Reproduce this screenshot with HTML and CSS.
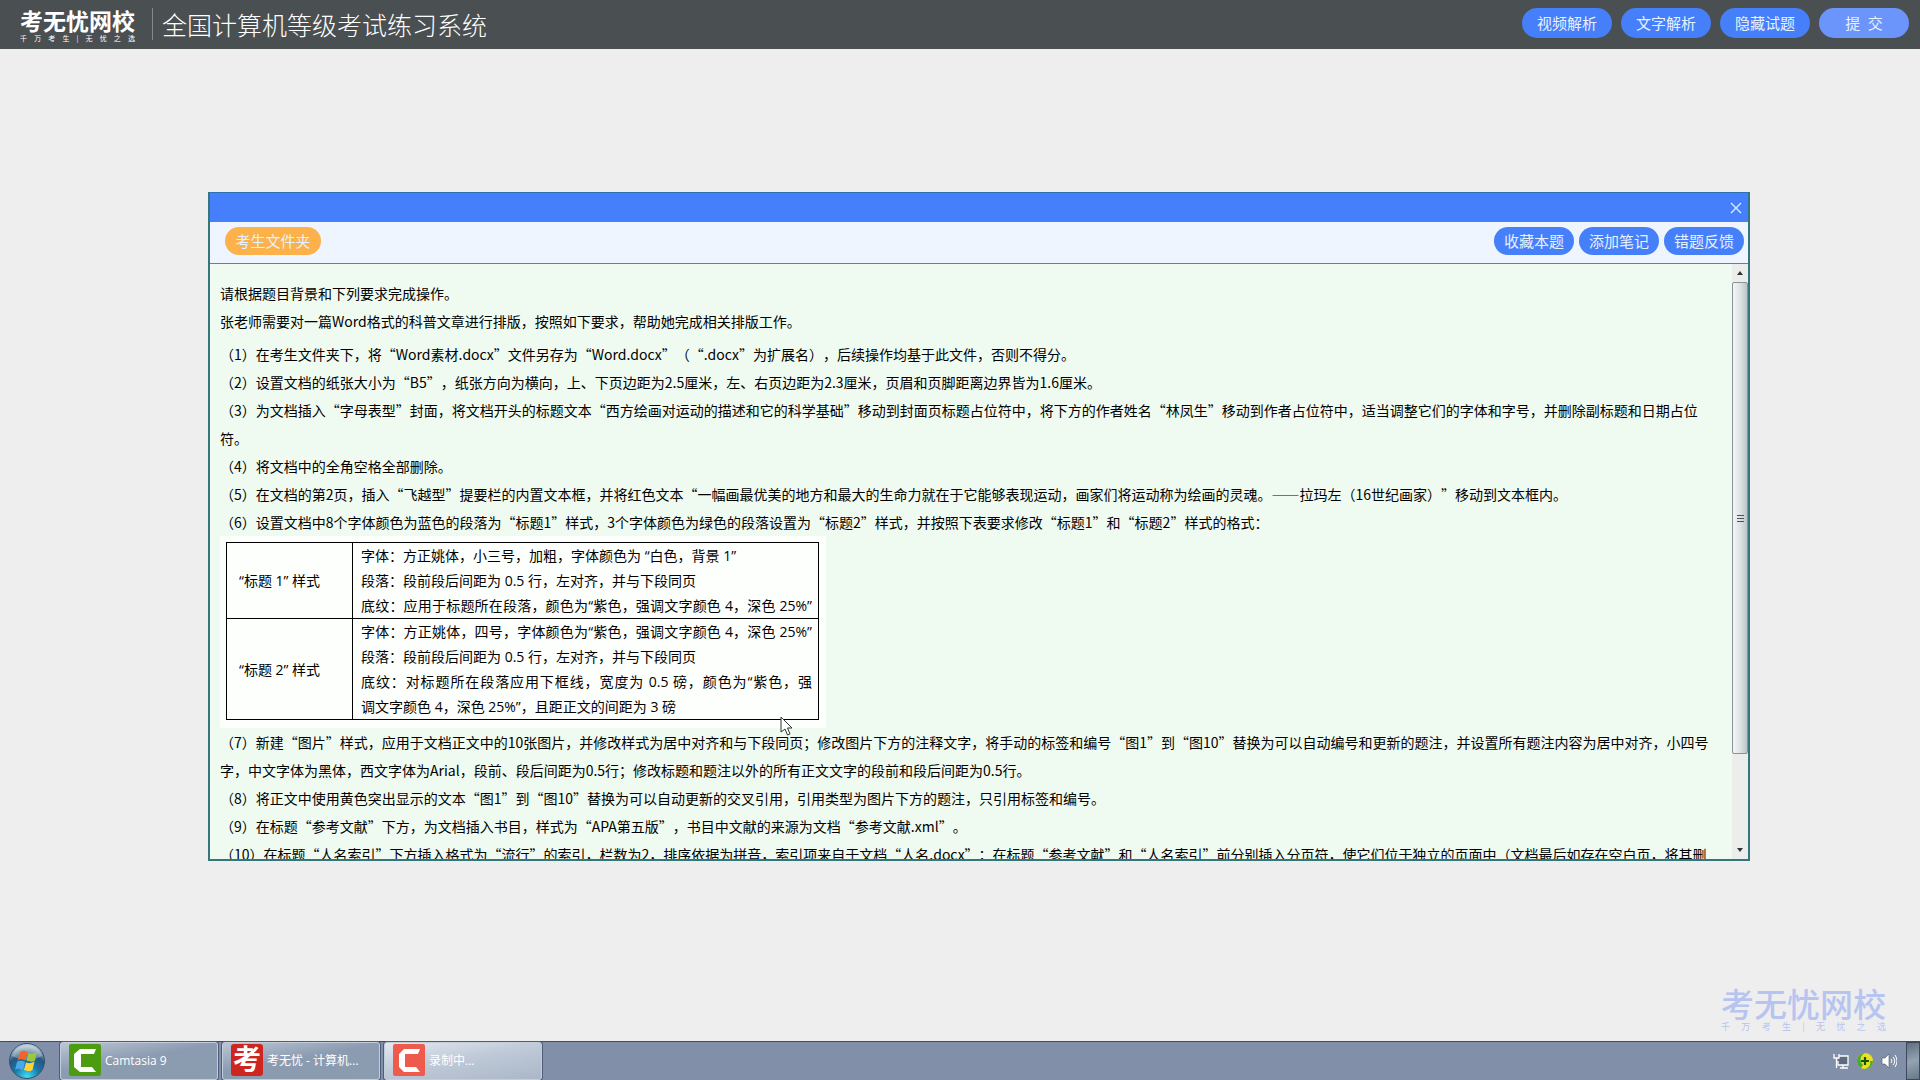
FILE: index.html
```html
<!DOCTYPE html>
<html lang="zh-CN">
  <head>
    <meta charset="UTF-8" />
    <meta name="viewport" content="width=device-width, initial-scale=1.0" />
    <title>全国计算机等级考试练习系统</title>
    <link rel="stylesheet" href="styles.css" />
  </head>
  <body>
    <header class="topbar">
      <div class="logo">
        <div class="logo_name">考无忧网校</div>
        <div class="logo_tag">
          <span>千</span><span>万</span><span>考</span><span>生</span><span>|</span><span>无</span><span>忧</span><span>之</span><span>选</span>
        </div>
      </div>
      <h1 class="title">全国计算机等级考试练习系统</h1>
      <nav class="actions">
        <button class="pill" type="button">视频解析</button>
        <button class="pill" type="button">文字解析</button>
        <button class="pill" type="button">隐藏试题</button>
        <button class="pill pill_light" type="button">提&ensp;交</button>
      </nav>
    </header>

    <main class="desktop">
      <section class="window">
        <div class="window_title">
          <button class="close" type="button" aria-label="关闭">
            <svg width="12" height="12" viewBox="0 0 12 12">
              <path d="M1 1l10 10M11 1L1 11" stroke="#d8f0ff" stroke-width="1.3" fill="none" />
            </svg>
          </button>
        </div>
        <div class="toolbar">
          <button class="pill pill_folder" type="button">考生文件夹</button>
          <div class="toolbar_right">
            <button class="pill pill_small" type="button">收藏本题</button>
            <button class="pill pill_small" type="button">添加笔记</button>
            <button class="pill pill_small" type="button">错题反馈</button>
          </div>
        </div>
        <div class="paper">
          <article class="question">
            <div class="intro">
              <p>请根据题目背景和下列要求完成操作。</p>
              <p>张老师需要对一篇Word格式的科普文章进行排版，按照如下要求，帮助她完成相关排版工作。</p>
            </div>
            <p>（1）在考生文件夹下，将“Word素材.docx”文件另存为“Word.docx”（“.docx”为扩展名），后续操作均基于此文件，否则不得分。</p>
            <p>（2）设置文档的纸张大小为“B5”，纸张方向为横向，上、下页边距为2.5厘米，左、右页边距为2.3厘米，页眉和页脚距离边界皆为1.6厘米。</p>
            <p>（3）为文档插入“字母表型”封面，将文档开头的标题文本“西方绘画对运动的描述和它的科学基础”移动到封面页标题占位符中，将下方的作者姓名“林凤生”移动到作者占位符中，适当调整它们的字体和字号，并删除副标题和日期占位<br />符。</p>
            <p>（4）将文档中的全角空格全部删除。</p>
            <p>（5）在文档的第2页，插入“飞越型”提要栏的内置文本框，并将红色文本“一幅画最优美的地方和最大的生命力就在于它能够表现运动，画家们将运动称为绘画的灵魂。——拉玛左（16世纪画家）”移动到文本框内。</p>
            <p>（6）设置文档中8个字体颜色为蓝色的段落为“标题1”样式，3个字体颜色为绿色的段落设置为“标题2”样式，并按照下表要求修改“标题1”和“标题2”样式的格式：</p>
            <div class="figure">
              <table class="styles_table">
                <tr>
                  <th scope="row">“标题 1” 样式</th>
                  <td>
                    <div>字体：方正姚体，小三号，加粗，字体颜色为 “白色，背景 1”</div>
                    <div>段落：段前段后间距为 0.5 行，左对齐，并与下段同页</div>
                    <div class="full">底纹：应用于标题所在段落，颜色为“紫色，强调文字颜色 4，深色 25%”</div>
                  </td>
                </tr>
                <tr>
                  <th scope="row">“标题 2” 样式</th>
                  <td>
                    <div class="full">字体：方正姚体，四号，字体颜色为“紫色，强调文字颜色 4，深色 25%”</div>
                    <div>段落：段前段后间距为 0.5 行，左对齐，并与下段同页</div>
                    <div class="full">底纹：对标题所在段落应用下框线，宽度为 0.5 磅，颜色为“紫色，强</div>
                    <div>调文字颜色 4，深色 25%”，且距正文的间距为 3 磅</div>
                  </td>
                </tr>
              </table>
              <svg class="cursor" width="13" height="20" viewBox="0 0 13 20">
                <path d="M1 1v15l4-3 2.500 6 2.500-1-2.500-6h4.500z" fill="#fff" stroke="#333" />
              </svg>
            </div>
            <p>（7）新建“图片”样式，应用于文档正文中的10张图片，并修改样式为居中对齐和与下段同页；修改图片下方的注释文字，将手动的标签和编号“图1”到“图10”替换为可以自动编号和更新的题注，并设置所有题注内容为居中对齐，小四号<br />字，中文字体为黑体，西文字体为Arial，段前、段后间距为0.5行；修改标题和题注以外的所有正文文字的段前和段后间距为0.5行。</p>
            <p>（8）将正文中使用黄色突出显示的文本“图1”到“图10”替换为可以自动更新的交叉引用，引用类型为图片下方的题注，只引用标签和编号。</p>
            <p>（9）在标题“参考文献”下方，为文档插入书目，样式为“APA第五版”，书目中文献的来源为文档“参考文献.xml”。</p>
            <p>（10）在标题“人名索引”下方插入格式为“流行”的索引，栏数为2，排序依据为拼音，索引项来自于文档“人名.docx”；在标题“参考文献”和“人名索引”前分别插入分页符，使它们位于独立的页面中（文档最后如存在空白页，将其删</p>
          </article>
          <div class="scrollbar">
            <svg class="arrow" width="16" height="18" viewBox="0 0 16 18"><path d="M5 11l3-4 3 4z" fill="#333" /></svg>
            <div class="thumb"><i></i><i></i><i></i></div>
            <svg class="arrow" width="16" height="18" viewBox="0 0 16 18"><path d="M5 7l3 4 3-4z" fill="#333" /></svg>
          </div>
        </div>
      </section>
      <div class="logo logo_watermark">
        <div class="logo_name">考无忧网校</div>
        <div class="logo_tag">
          <span>千</span><span>万</span><span>考</span><span>生</span><span>|</span><span>无</span><span>忧</span><span>之</span><span>选</span>
        </div>
      </div>
    </main>

    <footer class="taskbar">
      <button class="start" type="button" aria-label="开始">
        <svg width="38" height="38" viewBox="0 0 38 38">
          <defs>
            <radialGradient id="orb" cx="50%" cy="95%" r="90%">
              <stop offset="0" stop-color="#3fe0f5" />
              <stop offset=".4" stop-color="#1878a8" />
              <stop offset=".7" stop-color="#28567e" />
              <stop offset="1" stop-color="#b8cbd8" />
            </radialGradient>
          </defs>
          <circle cx="19" cy="19" r="17.500" fill="url(#orb)" stroke="#33516f" />
          <path d="M4 14C8 0 30 0 34 14 26 19 12 18 4 14z" fill="#fff" opacity=".3" />
          <path d="M12 10c3-2 5-1 7.500 0l-2 8.500c-3-1-5-2-8 0z" fill="#f0652b" />
          <path d="M20.500 11c3 1 5 1 8.500-1l-2 8.500c-3 2-5 1-8.500 0z" fill="#9bc83c" />
          <path d="M9 20c3-2 5-1 8 0l-2 8c-3-1-5-2-8 0z" fill="#4aa8e8" />
          <path d="M18 20.500c3 1 5 1 8.500-1l-2 8.500c-3 2-5 1-8.500 0z" fill="#ffd23c" />
        </svg>
      </button>
      <button class="task" type="button">
        <svg width="32" height="32" viewBox="0 0 32 32">
          <rect width="32" height="32" rx="2" fill="#4c9c12" />
          <path d="M27 5h-16l-6 5v13l6 5h16l-4-5h-11v-13h13z" fill="#fff" />
        </svg>
        Camtasia 9
      </button>
      <button class="task" type="button">
        <span class="seal">考</span>
        考无忧 - 计算机...
      </button>
      <button class="task task_active" type="button">
        <svg width="32" height="32" viewBox="0 0 32 32">
          <rect width="32" height="32" rx="2" fill="#ee5b4c" />
          <path d="M27 5h-16l-5 5v13l5 5h16l-4-5h-11v-13h13z" fill="#fff" />
        </svg>
        录制中...
      </button>
      <div class="tray">
        <svg width="16" height="16" viewBox="0 0 16 16">
          <path d="M6 3h9v9H5V8" fill="#5d6c80" stroke="#fff" stroke-width="1.300" />
          <path d="M1 1v4h5V1M3.500 5v10M7 15h8M10 12v3" fill="none" stroke="#fff" stroke-width="1.300" />
        </svg>
        <svg width="18" height="18" viewBox="0 0 18 18">
          <circle cx="9" cy="9" r="8" fill="#e9e022" />
          <path d="M1 9a8 8 0 0 1 8-8c-5 2-6 8-2 12l-2 3a8 8 0 0 1-4-7zM17 9a8 8 0 0 1-8 8c5-2 6-5 5-8z" fill="#48a92c" />
          <path d="M9 5v8M5 9h8" stroke="#17520f" stroke-width="2.200" />
        </svg>
        <svg width="16" height="16" viewBox="0 0 16 16">
          <path d="M1 5h3l4-4v14l-4-4H1z" fill="#fff" stroke="#4b586b" stroke-width=".6" />
          <path d="M10 6q2 2 0 4M12 4q3.500 4 0 8M14 2q4 6 0 12" fill="none" stroke="#fff" />
        </svg>
      </div>
      <button class="show_desktop" type="button" aria-label="显示桌面"></button>
    </footer>
  </body>
</html>
```
FILE: styles.css
```css
* {
  box-sizing: border-box;
}
body {
  margin: 0;
  height: 100vh;
  display: flex;
  flex-direction: column;
  overflow: hidden;
  background-color: #eeeeee;
  color: #000;
  font-family: "Noto Sans CJK SC", sans-serif;
  font-size: 14px;
  text-spacing-trim: space-all;
}
button {
  margin: 0;
  padding: 0;
  border: 0;
  font-family: inherit;
}
svg {
  display: block;
  flex: none;
}

/* header */
.topbar {
  flex: none;
  display: flex;
  align-items: center;
  height: 49px;
  padding: 0 11px 0 20px;
  background-color: #4a4f52;
  color: #fff;
}
.logo_name {
  font-size: 23px;
  font-weight: 700;
  line-height: 24px;
}
.logo_tag {
  display: flex;
  justify-content: space-between;
  margin-top: 2px;
  font-size: 7px;
  line-height: 8px;
}
.title {
  margin: 0 0 2px 17px;
  padding-left: 9px;
  border-left: 1px solid #85898b;
  font-size: 25px;
  font-weight: 300;
  line-height: 32px;
}
.actions {
  display: flex;
  gap: 9px;
  margin-left: auto;
  margin-bottom: 3px;
}
.pill {
  width: 90px;
  height: 30px;
  border-radius: 15px;
  background-color: #467ffa;
  color: #e6f2ff;
  font-size: 15px;
  line-height: 20px;
}
.pill_light {
  background-color: #6b95fb;
}
.pill_small {
  width: 80px;
  height: 28px;
}
.pill_folder {
  width: 96px;
  height: 28px;
  background-color: #fdb14b;
}

/* question window */
.desktop {
  position: relative;
  flex: 1;
  min-height: 0;
  display: flex;
  padding: 143px 170px 180px 208px;
}
.window {
  flex: 1;
  display: flex;
  flex-direction: column;
  min-width: 0;
  border: 2px solid #35757c;
  border-top: 1px solid #2d72b0;
}
.window_title {
  flex: none;
  display: flex;
  align-items: center;
  justify-content: flex-end;
  height: 29px;
  padding-right: 6px;
  background-color: #457ffb;
}
.close {
  background: none;
}
.toolbar {
  flex: none;
  display: flex;
  align-items: center;
  justify-content: space-between;
  height: 42px;
  padding: 0 4px 4px 15px;
  border-bottom: 1px solid #6c7f8d;
  background-color: #eef5ff;
}
.toolbar_right {
  display: flex;
  gap: 5px;
}
.paper {
  flex: 1;
  min-height: 0;
  display: flex;
  background-color: #effbf0;
}
.question {
  flex: 1;
  min-width: 0;
  padding: 15px 10px 0;
  overflow: hidden;
  line-height: 28px;
}
.question p {
  margin: 0;
  white-space: nowrap;
}
.intro {
  margin-bottom: 5px;
}
.figure {
  position: relative;
  width: fit-content;
  padding: 6px 7px 8px 6px;
  background-color: #fdfffd;
}
.styles_table {
  width: 593px;
  border-collapse: collapse;
  table-layout: fixed;
  font-family: "Open Sans", "Noto Sans CJK SC", sans-serif;
  line-height: 25px;
}
.styles_table th,
.styles_table td {
  padding: 0 6px 0 8px;
  border: 1px solid #000;
  white-space: nowrap;
}
.styles_table th {
  width: 126px;
  padding: 0 12px;
  font-weight: 400;
  text-align: left;
}
.full {
  text-align-last: justify;
}
.cursor {
  position: absolute;
  right: 33px;
  bottom: -8px;
}

.scrollbar {
  flex: none;
  display: flex;
  flex-direction: column;
  width: 16px;
  background-color: #ebeeeb;
}
.thumb {
  flex: 1;
  display: flex;
  flex-direction: column;
  align-items: center;
  justify-content: center;
  gap: 2px;
  margin-bottom: 87px;
  border: 1px solid #8b9296;
  border-radius: 2px;
  background: linear-gradient(90deg, #f4f6f6, #dfe3e4 50%, #bcc4c8);
}
.thumb i {
  width: 7px;
  height: 1px;
  background-color: #4a5358;
}

.logo_watermark {
  position: absolute;
  right: 34px;
  bottom: 8px;
  color: #b7c4f0;
}
.logo_watermark .logo_name {
  font-size: 33px;
  font-weight: 500;
  line-height: 36px;
}
.logo_watermark .logo_tag {
  margin-top: 0;
  font-size: 9px;
  line-height: 12px;
}

/* taskbar */
.taskbar {
  flex: none;
  display: flex;
  align-items: stretch;
  gap: 4px;
  height: 39px;
  border-top: 1px solid #3f4b66;
  background-color: #818fa9;
}
.start {
  width: 56px;
  padding-left: 8px;
  background: none;
}
.task {
  display: flex;
  align-items: center;
  gap: 4px;
  width: 158px;
  padding: 0 0 2px 8px;
  border: 1px solid #c3ccd9;
  border-radius: 3px;
  background: linear-gradient(170deg, #bcc5d4, #8b9bb1 45%, #8a9caf);
  color: #fff;
  font-family: "Open Sans", "Noto Sans CJK SC", sans-serif;
  font-size: 12px;
  white-space: nowrap;
  box-shadow: 0 0 0 1px #4f5d78;
}
.task_active {
  background: linear-gradient(170deg, #e3e8f0, #c0cad8 45%, #aab7c8);
}
.seal {
  width: 32px;
  height: 32px;
  border-radius: 3px;
  background-color: #cf2520;
  font-size: 28px;
  font-weight: 700;
  line-height: 30px;
}
.tray {
  display: flex;
  align-items: center;
  gap: 7px;
  margin-left: auto;
}
.show_desktop {
  width: 14px;
  margin-left: 5px;
  border: 1px solid #3e4a5a;
  background: linear-gradient(160deg, #5f6e80, #93a3b2 50%, #66788a);
}
```
